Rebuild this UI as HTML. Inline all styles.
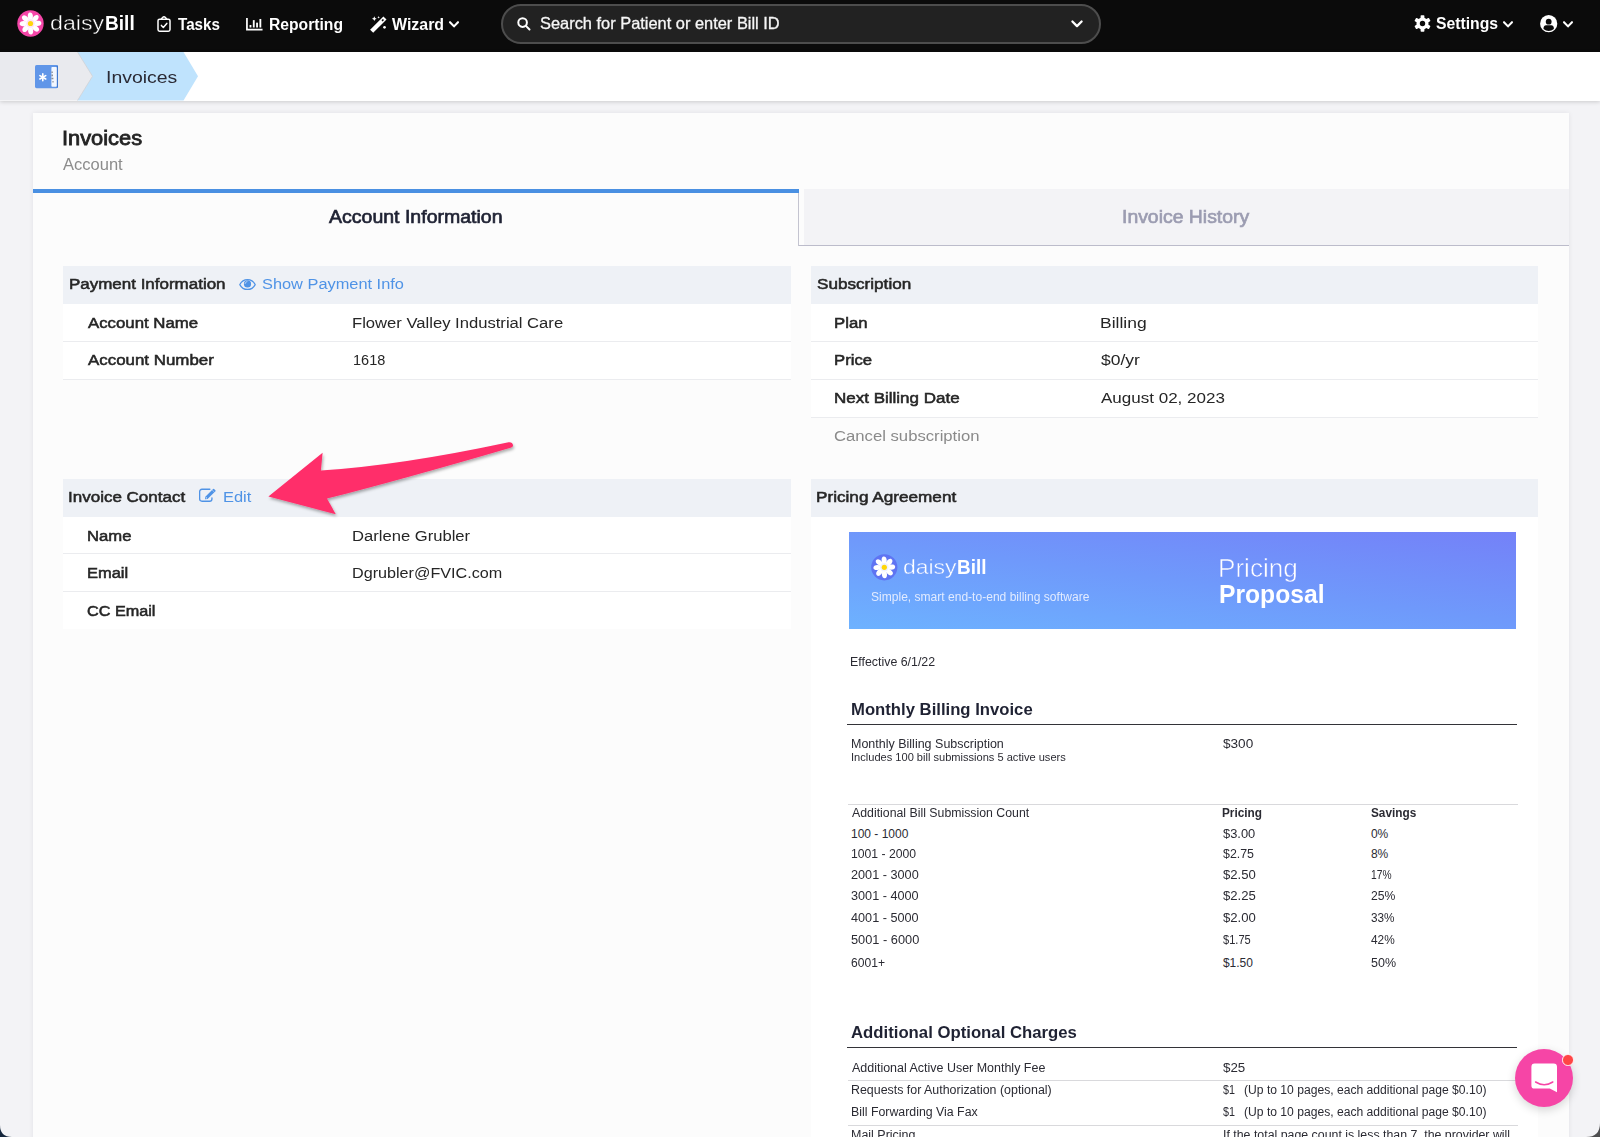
<!DOCTYPE html>
<html lang="en">
<head>
<meta charset="utf-8">
<title>Invoices - daisyBill</title>
<style>
*{box-sizing:border-box;margin:0;padding:0}
html,body{width:1600px;height:1137px;overflow:hidden}
body{position:relative;background:#f3f3f6;font-family:"Liberation Sans",Arial,sans-serif;color:#222;font-size:16px;line-height:1}
.a{position:absolute}
.t{position:absolute;white-space:nowrap;line-height:1;font-size:15.5px;color:#262626}
.b{font-weight:400;-webkit-text-stroke:.55px currentColor}
.bb{font-weight:700}
svg{position:absolute;overflow:visible}

/* ---------- top nav ---------- */
#nav{position:absolute;left:0;top:0;width:1600px;height:52px;background:#0b0b0b}
#nav .t{color:#fff}
#search{position:absolute;left:500.5px;top:4.3px;width:600px;height:39.5px;border-radius:20px;background:#222;border:2.2px solid #4d4d4d}

/* ---------- breadcrumb ---------- */
#crumbs{position:absolute;left:0;top:52px;width:1600px;height:48.5px;background:#fff;box-shadow:0 1px 4px rgba(0,0,0,.17)}

/* ---------- card ---------- */
#card{position:absolute;left:33px;top:112.5px;width:1535.5px;height:1040px;background:#fcfcfc;box-shadow:0 0 5px rgba(30,30,40,.075)}
.hdr{position:absolute;height:38px;background:#eef1f6}
.row{position:absolute;height:38px;background:#fff;border-bottom:1px solid #ebecef}
.lnk{color:#4f93e6}
.doc{color:#2b2b33;font-size:12px}
.rule{position:absolute;left:847.3px;width:670.2px;height:1.25px;background:#333338}
.lrule{position:absolute;left:847.5px;width:670px;height:1px;background:#d9d9dc}
</style>
</head>
<body>

<!-- ================= NAV ================= -->
<div id="nav">
  <!-- daisy logo -->
  <svg style="left:17px;top:10.1px" width="27" height="27" viewBox="-13.5 -13.5 27 27">
    <circle r="13.2" fill="#f546a8"/>
    <g fill="#fff">
      <path d="M-1.2,-2.2 C-3.2,-6 -3.4,-10.6 -0.6,-10.9 C2.6,-11.1 3.2,-6.5 1.4,-2.2 Z"/><path d="M-1.2,-2.2 C-3.2,-6 -3.4,-10.6 -0.6,-10.9 C2.6,-11.1 3.2,-6.5 1.4,-2.2 Z" transform="rotate(45)"/><path d="M-1.2,-2.2 C-3.2,-6 -3.4,-10.6 -0.6,-10.9 C2.6,-11.1 3.2,-6.5 1.4,-2.2 Z" transform="rotate(90)"/><path d="M-1.2,-2.2 C-3.2,-6 -3.4,-10.6 -0.6,-10.9 C2.6,-11.1 3.2,-6.5 1.4,-2.2 Z" transform="rotate(135)"/><path d="M-1.2,-2.2 C-3.2,-6 -3.4,-10.6 -0.6,-10.9 C2.6,-11.1 3.2,-6.5 1.4,-2.2 Z" transform="rotate(180)"/><path d="M-1.2,-2.2 C-3.2,-6 -3.4,-10.6 -0.6,-10.9 C2.6,-11.1 3.2,-6.5 1.4,-2.2 Z" transform="rotate(225)"/><path d="M-1.2,-2.2 C-3.2,-6 -3.4,-10.6 -0.6,-10.9 C2.6,-11.1 3.2,-6.5 1.4,-2.2 Z" transform="rotate(270)"/><path d="M-1.2,-2.2 C-3.2,-6 -3.4,-10.6 -0.6,-10.9 C2.6,-11.1 3.2,-6.5 1.4,-2.2 Z" transform="rotate(315)"/>
      <circle r="4.2" fill="#ffe3f3"/>
    </g>
    <circle r="2.6" fill="#ffd60a"/>
  </svg>
  <span class="t" style="font-size:20px;-webkit-text-stroke:.4px #0b0b0b;left:50.33px;top:13px;transform:scaleX(1.1589);transform-origin:0 0">daisy</span>
  <span class="t bb" style="font-size:20px;left:105.41px;top:13px;transform:scaleX(0.9544);transform-origin:0 0">Bill</span>

  <!-- tasks icon -->
  <svg style="left:157px;top:16px" width="14" height="16" viewBox="0 0 14 16" fill="none" stroke="#fff" stroke-width="1.5" stroke-linejoin="round" stroke-linecap="round">
    <rect x="1" y="3.2" width="12" height="12" rx="1.6"/>
    <path d="M4.2 3.2 L5.6 1.5 Q7 .1 8.4 1.5 L9.8 3.2"/>
    <path d="M4.4 9.4 L6.3 11.4 L9.8 7.4"/>
  </svg>
  <span class="t bb" style="font-size:16px;left:178.06px;top:17px;transform:scaleX(0.9480);transform-origin:0 0">Tasks</span>

  <!-- reporting icon -->
  <svg style="left:246.4px;top:17.6px" width="16.6" height="12.6" viewBox="0 0 17 13" fill="#fff">
    <path d="M0 0 H1.8 V11.2 H17 V13 H0 Z"/>
    <rect x="3.6" y="7.2" width="1.9" height="2.6"/><rect x="7" y="2.2" width="1.9" height="7.6"/><rect x="10.4" y="4.8" width="1.9" height="5"/><rect x="13.8" y="1" width="1.9" height="8.8"/>
  </svg>
  <span class="t bb" style="font-size:16px;left:268.72px;top:17px;transform:scaleX(0.9796);transform-origin:0 0">Reporting</span>

  <!-- wizard (magic wand) icon -->
  <svg style="left:369.5px;top:15.5px" width="17" height="17" viewBox="0 0 17 17" fill="#fff">
    <path d="M.1 13.7 L13.4 .4 L16.5 3.5 L3.2 16.8 Z"/>
    <path d="M12.9 2.9 L14.0 4.0 L12.6 5.4 L11.5 4.3 Z" fill="#0b0b0b"/>
    <path d="M4.3 .3 l.75 1.6 1.6.75 -1.6.75 -.75 1.6 -.75-1.6 -1.6-.75 1.6-.75z"/>
    <path d="M8.6 0 l.4 .9 .9 .4 -.9 .4 -.4 .9 -.4-.9 -.9-.4 .9-.4z"/>
    <circle cx="14.5" cy="11.3" r="1.35"/>
  </svg>
  <span class="t bb" style="font-size:16px;left:392.00px;top:17px;transform:scaleX(0.9951);transform-origin:0 0">Wizard</span>
  <svg style="left:449px;top:21.3px" width="10" height="7" viewBox="0 0 10 7" fill="none" stroke="#fff" stroke-width="2.1" stroke-linecap="round" stroke-linejoin="round"><path d="M1 1.2 L5 5.4 L9 1.2"/></svg>

  <!-- search -->
  <div id="search"></div>
  <svg style="left:517px;top:16.9px" width="14" height="14" viewBox="0 0 14 14" fill="none" stroke="#fff" stroke-width="2" stroke-linecap="round"><circle cx="5.6" cy="5.6" r="4.3"/><path d="M8.9 8.9 L12.5 12.5"/></svg>
  <span class="t" style="font-size:16.5px;color:#f6f6f6;-webkit-text-stroke:.3px #f6f6f6;left:540.20px;top:15px;transform:scaleX(0.9938);transform-origin:0 0">Search for Patient or enter Bill ID</span>
  <svg style="left:1070.5px;top:20px" width="12" height="8" viewBox="0 0 12 8" fill="none" stroke="#fff" stroke-width="2.3" stroke-linecap="round" stroke-linejoin="round"><path d="M1.4 1.5 L6 6.1 L10.6 1.5"/></svg>

  <!-- settings -->
  <svg style="left:1413.5px;top:15.2px" width="17" height="17" viewBox="-8.5 -8.5 17 17">
    <g fill="#fff">
      <circle r="6"/>
      <rect x="-1.9" y="-8.3" width="3.8" height="4" rx=".7"/><rect x="-1.9" y="-8.3" width="3.8" height="4" rx=".7" transform="rotate(60)"/><rect x="-1.9" y="-8.3" width="3.8" height="4" rx=".7" transform="rotate(120)"/><rect x="-1.9" y="-8.3" width="3.8" height="4" rx=".7" transform="rotate(180)"/><rect x="-1.9" y="-8.3" width="3.8" height="4" rx=".7" transform="rotate(240)"/><rect x="-1.9" y="-8.3" width="3.8" height="4" rx=".7" transform="rotate(300)"/>
    </g>
    <circle r="2.7" fill="#0b0b0b"/>
  </svg>
  <span class="t bb" style="font-size:16px;left:1435.81px;top:16px;transform:scaleX(0.9839);transform-origin:0 0">Settings</span>
  <svg style="left:1503px;top:21.4px" width="10" height="7" viewBox="0 0 10 7" fill="none" stroke="#fff" stroke-width="2.05" stroke-linecap="round" stroke-linejoin="round"><path d="M1 1.2 L5 5.4 L9 1.2"/></svg>

  <!-- user -->
  <svg style="left:1539.7px;top:15px" width="17.4" height="17.4" viewBox="-8.7 -8.7 17.4 17.4">
    <circle r="8.6" fill="#fff"/>
    <circle cy="-2" r="2.9" fill="#0b0b0b"/>
    <path d="M-5.2 5.2 Q-5.2 1.6 -2.6 1.6 H2.6 Q5.2 1.6 5.2 5.2 Q2.8 7.2 0 7.2 Q-2.8 7.2 -5.2 5.2Z" fill="#0b0b0b"/>
  </svg>
  <svg style="left:1563px;top:21.4px" width="10" height="7" viewBox="0 0 10 7" fill="none" stroke="#fff" stroke-width="2.05" stroke-linecap="round" stroke-linejoin="round"><path d="M1 1.2 L5 5.4 L9 1.2"/></svg>
</div>

<!-- ================= BREADCRUMB ================= -->
<div id="crumbs">
  <svg style="left:0;top:0" width="210" height="48.5" viewBox="0 0 210 48.5">
    <path d="M0 0 H77.5 L92.5 24.25 L77.5 48.5 H0 Z" fill="#e9eaee"/>
    <path d="M77.5 0 H183.5 L198 24.25 L183.5 48.5 H77.5 L92.5 24.25 Z" fill="#bfe3fd"/>
    <path d="M77.5 0 L92.5 24.25 L77.5 48.5" fill="none" stroke="#cfd0d4" stroke-width=".8"/>
    <!-- address-book style icon -->
    <rect x="35" y="13" width="23" height="23.2" rx="1.6" fill="#6096e8"/>
    <rect x="56.6" y="13.6" width="1.4" height="22" fill="#3f78d0"/>
    <rect x="51.4" y="15" width="5.4" height="19.8" rx=".8" fill="#f2f7ff"/>
    <path d="M51.4 19.5 h1.4 v1.6 h-1.4z M51.4 22.6 h1.6 v1.6 h-1.6z M51.4 25.8 h2 v1.4 h-2z M52.4 29 h1.2 v1.4 h-1.2z" fill="#8a8f99"/>
    <g stroke="#fff" stroke-width="1.65" stroke-linecap="round"><path d="M42.8 21.9 V28.7"/><path d="M39.9 23.6 L45.7 27"/><path d="M39.9 27 L45.7 23.6"/></g>
  </svg>
  <span class="t" style="font-size:17.2px;color:#2a2a35;left:106.30px;top:17px;transform:scaleX(1.1311);transform-origin:0 0">Invoices</span>
</div>

<!-- ================= CARD ================= -->
<div id="card"></div>
<span class="t b" style="font-size:20px;color:#242424;-webkit-text-stroke-width:.8px;left:61.96px;top:128px;transform:scaleX(1.0909);transform-origin:0 0">Invoices</span>
<span class="t" style="font-size:16px;color:#8c8c8c;left:63.20px;top:157px;transform:scaleX(1.0320);transform-origin:0 0">Account</span>

<!-- tabs -->
<div class="a" style="left:33px;top:189.25px;width:765.75px;height:3.9px;background:#4a90e2"></div>
<div class="a" style="left:803.75px;top:189.25px;width:764.75px;height:56px;background:#f3f3f6"></div>
<div class="a" style="left:798.3px;top:193px;width:1px;height:52.6px;background:#c4c4d0"></div>
<div class="a" style="left:798.6px;top:244.7px;width:770px;height:1px;background:#bcbccb"></div>
<span class="t b" style="font-size:18px;color:#1f2233;-webkit-text-stroke-width:.65px;left:329.14px;top:208px;transform:scaleX(1.0842);transform-origin:0 0">Account Information</span>
<span class="t b" style="font-size:18px;color:#9b9cb1;-webkit-text-stroke-width:.65px;left:1122.05px;top:208px;transform:scaleX(1.0772);transform-origin:0 0">Invoice History</span>

<!-- left column: payment information -->
<div class="hdr" style="left:63px;top:265.5px;width:727.5px"></div>
<div class="row" style="left:63px;top:303.5px;width:727.5px"></div>
<div class="row" style="left:63px;top:341.5px;width:727.5px"></div>
<span class="t b" style="left:68.51px;top:276px;transform:scaleX(1.0945);transform-origin:0 0">Payment Information</span>
<svg style="left:238.7px;top:278.5px" width="17" height="11.2" viewBox="0 0 17 11.2">
  <path d="M.8 5.6 C2.6 2.2 5.4 .7 8.5 .7 S14.4 2.2 16.2 5.6 C14.4 9 11.6 10.5 8.5 10.5 S2.6 9 .8 5.6Z" fill="none" stroke="#4f93e6" stroke-width="1.25" stroke-linejoin="round"/>
  <circle cx="8.5" cy="4.9" r="3.6" fill="#4f93e6"/><path d="M6 4.6 Q6.2 2.8 8 2.5" fill="none" stroke="#cfe0f8" stroke-width=".8" stroke-linecap="round"/>
</svg>
<span class="t lnk" style="left:261.81px;top:276px;transform:scaleX(1.0556);transform-origin:0 0">Show Payment Info</span>
<span class="t b" style="left:87.87px;top:315px;transform:scaleX(1.0837);transform-origin:0 0">Account Name</span>
<span class="t" style="left:352.36px;top:315px;transform:scaleX(1.0718);transform-origin:0 0">Flower Valley Industrial Care</span>
<span class="t b" style="left:87.87px;top:352px;transform:scaleX(1.0903);transform-origin:0 0">Account Number</span>
<span class="t" style="left:352.83px;top:352px;transform:scaleX(0.9354);transform-origin:0 0">1618</span>

<!-- left column: invoice contact -->
<div class="hdr" style="left:63px;top:478.5px;width:727.5px"></div>
<div class="row" style="left:63px;top:516.5px;width:727.5px;height:37.5px"></div>
<div class="row" style="left:63px;top:554px;width:727.5px"></div>
<div class="row" style="left:63px;top:592px;width:727.5px;height:37.3px;border-bottom:0"></div>
<span class="t b" style="left:67.83px;top:489px;transform:scaleX(1.0969);transform-origin:0 0">Invoice Contact</span>
<svg style="left:199.4px;top:488.4px" width="17.4" height="14.6" viewBox="0 0 17.4 14.6" fill="none" stroke="#4f93e6" stroke-width="1.3" stroke-linejoin="round" stroke-linecap="round">
  <path d="M12.95 9.8 V10.9 Q12.95 13.25 10.6 13.25 H3 Q.65 13.25 .65 10.9 V3.6 Q.65 1.25 3 1.25 H10.9"/>
  <path d="M6 11.3 L6.3 8.75 L14.1 .95 Q14.6 .5 15.1 .95 L16.4 2.25 Q16.85 2.75 16.4 3.25 L8.55 11.05 Z" fill="#4f93e6" stroke="none"/>
  <path d="M13.1 1.9 L15.4 4.2" stroke="#cfe0f8" stroke-width=".55"/>
  <circle cx="7.35" cy="9.95" r=".62" fill="#e6eefb" stroke="none"/>
</svg>
<span class="t lnk" style="left:222.87px;top:489px;transform:scaleX(1.0614);transform-origin:0 0">Edit</span>
<span class="t b" style="left:86.52px;top:528px;transform:scaleX(1.0750);transform-origin:0 0">Name</span>
<span class="t" style="left:352.36px;top:528px;transform:scaleX(1.0713);transform-origin:0 0">Darlene Grubler</span>
<span class="t b" style="left:86.54px;top:565px;transform:scaleX(1.0622);transform-origin:0 0">Email</span>
<span class="t" style="left:352.40px;top:565px;transform:scaleX(1.0427);transform-origin:0 0">Dgrubler@FVIC.com</span>
<span class="t b" style="left:87.08px;top:603px;transform:scaleX(1.0459);transform-origin:0 0">CC Email</span>

<!-- right column: subscription -->
<div class="hdr" style="left:810.5px;top:265.5px;width:727.75px"></div>
<div class="row" style="left:810.5px;top:303.5px;width:727.75px"></div>
<div class="row" style="left:810.5px;top:341.5px;width:727.75px"></div>
<div class="row" style="left:810.5px;top:379.5px;width:727.75px"></div>
<span class="t b" style="left:816.65px;top:276px;transform:scaleX(1.1048);transform-origin:0 0">Subscription</span>
<span class="t b" style="left:834.12px;top:315px;transform:scaleX(1.0803);transform-origin:0 0">Plan</span>
<span class="t" style="left:1099.89px;top:315px;transform:scaleX(1.1282);transform-origin:0 0">Billing</span>
<span class="t b" style="left:834.12px;top:352px;transform:scaleX(1.0765);transform-origin:0 0">Price</span>
<span class="t" style="left:1101.02px;top:352px;transform:scaleX(1.1294);transform-origin:0 0">$0/yr</span>
<span class="t b" style="left:834.10px;top:390px;transform:scaleX(1.0967);transform-origin:0 0">Next Billing Date</span>
<span class="t" style="left:1101.30px;top:390px;transform:scaleX(1.0976);transform-origin:0 0">August 02, 2023</span>
<span class="t" style="color:#8a8a8a;left:834.39px;top:428px;transform:scaleX(1.0757);transform-origin:0 0">Cancel subscription</span>

<!-- right column: pricing agreement -->
<div class="hdr" style="left:810.5px;top:478.5px;width:727.75px"></div>
<div class="a" style="left:810.5px;top:516.5px;width:727.75px;height:640px;background:#fff"></div>
<span class="t b" style="left:816.09px;top:489px;transform:scaleX(1.1070);transform-origin:0 0">Pricing Agreement</span>
<!-- pricing proposal document -->
<div class="a" style="left:848.75px;top:531.75px;width:667.5px;height:97px;background:linear-gradient(7deg,#6db2ff 0%,#6f99fb 50%,#7481f8 100%)"></div>
<svg style="left:870.5px;top:554.3px" width="26.6" height="26.6" viewBox="-13.3 -13.3 26.6 26.6">
  <circle r="13.1" fill="#5f74f2"/>
  <g fill="#fff">
    <path d="M-1.2,-2.2 C-3.2,-6 -3.4,-10.6 -0.6,-10.9 C2.6,-11.1 3.2,-6.5 1.4,-2.2 Z"/><path d="M-1.2,-2.2 C-3.2,-6 -3.4,-10.6 -0.6,-10.9 C2.6,-11.1 3.2,-6.5 1.4,-2.2 Z" transform="rotate(45)"/><path d="M-1.2,-2.2 C-3.2,-6 -3.4,-10.6 -0.6,-10.9 C2.6,-11.1 3.2,-6.5 1.4,-2.2 Z" transform="rotate(90)"/><path d="M-1.2,-2.2 C-3.2,-6 -3.4,-10.6 -0.6,-10.9 C2.6,-11.1 3.2,-6.5 1.4,-2.2 Z" transform="rotate(135)"/><path d="M-1.2,-2.2 C-3.2,-6 -3.4,-10.6 -0.6,-10.9 C2.6,-11.1 3.2,-6.5 1.4,-2.2 Z" transform="rotate(180)"/><path d="M-1.2,-2.2 C-3.2,-6 -3.4,-10.6 -0.6,-10.9 C2.6,-11.1 3.2,-6.5 1.4,-2.2 Z" transform="rotate(225)"/><path d="M-1.2,-2.2 C-3.2,-6 -3.4,-10.6 -0.6,-10.9 C2.6,-11.1 3.2,-6.5 1.4,-2.2 Z" transform="rotate(270)"/><path d="M-1.2,-2.2 C-3.2,-6 -3.4,-10.6 -0.6,-10.9 C2.6,-11.1 3.2,-6.5 1.4,-2.2 Z" transform="rotate(315)"/>
    <circle r="4.2" fill="#eef1ff"/>
  </g>
  <circle r="2.6" fill="#ffd60a"/>
</svg>
<span class="t" style="font-size:21px;color:#fff;-webkit-text-stroke:.4px #6e9bfb;left:903.08px;top:556px;transform:scaleX(1.0928);transform-origin:0 0">daisy</span>
<span class="t bb" style="font-size:21px;color:#fff;left:957.05px;top:556px;transform:scaleX(0.9008);transform-origin:0 0">Bill</span>
<span class="t" style="font-size:12px;color:#e2ebff;left:870.90px;top:591px;transform:scaleX(1.0042);transform-origin:0 0">Simple, smart end-to-end billing software</span>
<span class="t" style="font-size:26.5px;color:#fff;-webkit-text-stroke:.55px #7090fa;left:1218.43px;top:555px;transform:scaleX(0.9858);transform-origin:0 0">Pricing</span>
<span class="t bb" style="font-size:25.5px;color:#fff;left:1218.71px;top:582px;transform:scaleX(0.9668);transform-origin:0 0">Proposal</span>

<span class="t doc" style="left:850.37px;top:656px;transform:scaleX(1.0321);transform-origin:0 0">Effective 6/1/22</span>

<span class="t bb" style="font-size:16.5px;color:#1f2233;left:850.79px;top:701px;transform:scaleX(1.0112);transform-origin:0 0">Monthly Billing Invoice</span>
<div class="rule" style="top:723.8px"></div>
<span class="t doc" style="left:850.56px;top:738px;transform:scaleX(1.0414);transform-origin:0 0">Monthly Billing Subscription</span>
<span class="t doc" style="font-size:11px;left:850.59px;top:752px;transform:scaleX(1.0066);transform-origin:0 0">Includes 100 bill submissions 5 active users</span>
<span class="t doc" style="left:1222.92px;top:738px;transform:scaleX(1.1308);transform-origin:0 0">$300</span>

<div class="lrule" style="top:804px"></div>
<span class="t doc" style="left:851.60px;top:807px;transform:scaleX(1.0258);transform-origin:0 0">Additional Bill Submission Count</span>
<span class="t doc bb" style="left:1222.46px;top:807px;transform:scaleX(0.9834);transform-origin:0 0">Pricing</span>
<span class="t doc bb" style="left:1370.91px;top:807px;transform:scaleX(0.9822);transform-origin:0 0">Savings</span>

<span class="t doc" style="left:851.00px;top:828px">100 - 1000</span><span class="t doc" style="left:1222.93px;top:828px;transform:scaleX(1.0735);transform-origin:0 0">$3.00</span><span class="t doc" style="left:1370.90px;top:828px">0%</span>
<span class="t doc" style="left:850.98px;top:848px;transform:scaleX(1.0160);transform-origin:0 0">1001 - 2000</span><span class="t doc" style="left:1222.94px;top:848px;transform:scaleX(1.0325);transform-origin:0 0">$2.75</span><span class="t doc" style="left:1370.90px;top:848px">8%</span>
<span class="t doc" style="left:851.07px;top:869px;transform:scaleX(1.0571);transform-origin:0 0">2001 - 3000</span><span class="t doc" style="left:1222.93px;top:869px;transform:scaleX(1.0940);transform-origin:0 0">$2.50</span><span class="t doc" style="left:1371.15px;top:869px;transform:scaleX(0.8527);transform-origin:0 0">17%</span>
<span class="t doc" style="left:851.07px;top:890px;transform:scaleX(1.0556);transform-origin:0 0">3001 - 4000</span><span class="t doc" style="left:1222.93px;top:890px;transform:scaleX(1.0940);transform-origin:0 0">$2.25</span><span class="t doc" style="left:1370.89px;top:890px;transform:scaleX(1.0151);transform-origin:0 0">25%</span>
<span class="t doc" style="left:851.34px;top:912px;transform:scaleX(1.0561);transform-origin:0 0">4001 - 5000</span><span class="t doc" style="left:1222.93px;top:912px;transform:scaleX(1.0940);transform-origin:0 0">$2.00</span><span class="t doc" style="left:1370.91px;top:912px;transform:scaleX(0.9806);transform-origin:0 0">33%</span>
<span class="t doc" style="left:851.07px;top:934px;transform:scaleX(1.0667);transform-origin:0 0">5001 - 6000</span><span class="t doc" style="left:1222.97px;top:934px;transform:scaleX(0.9231);transform-origin:0 0">$1.75</span><span class="t doc" style="left:1371.15px;top:934px;transform:scaleX(0.9872);transform-origin:0 0">42%</span>
<span class="t doc" style="left:851.10px;top:957px;transform:scaleX(1.0076);transform-origin:0 0">6001+</span><span class="t doc" style="left:1222.95px;top:957px">$1.50</span><span class="t doc" style="left:1370.88px;top:957px;transform:scaleX(1.0409);transform-origin:0 0">50%</span>

<span class="t bb" style="font-size:16.5px;color:#1f2233;left:851.29px;top:1024px;transform:scaleX(1.0140);transform-origin:0 0">Additional Optional Charges</span>
<div class="rule" style="top:1046.8px"></div>
<span class="t doc" style="left:851.60px;top:1062px;transform:scaleX(1.0388);transform-origin:0 0">Additional Active User Monthly Fee</span><span class="t doc" style="left:1222.92px;top:1062px;transform:scaleX(1.1117);transform-origin:0 0">$25</span>
<div class="lrule" style="top:1080.3px"></div>
<span class="t doc" style="left:850.57px;top:1084px;transform:scaleX(1.0338);transform-origin:0 0">Requests for Authorization (optional)</span><span class="t doc" style="left:1222.98px;top:1084px;transform:scaleX(0.8960);transform-origin:0 0">$1</span><span class="t doc" style="left:1243.64px;top:1084px;transform:scaleX(1.0094);transform-origin:0 0">(Up to 10 pages, each additional page $0.10)</span>
<span class="t doc" style="left:850.57px;top:1106px;transform:scaleX(1.0287);transform-origin:0 0">Bill Forwarding Via Fax</span><span class="t doc" style="left:1222.98px;top:1106px;transform:scaleX(0.8960);transform-origin:0 0">$1</span><span class="t doc" style="left:1243.64px;top:1106px;transform:scaleX(1.0094);transform-origin:0 0">(Up to 10 pages, each additional page $0.10)</span>
<div class="lrule" style="top:1125px"></div>
<span class="t doc" style="left:850.56px;top:1129px;transform:scaleX(1.0390);transform-origin:0 0">Mail Pricing</span><span class="t doc" style="left:1222.57px;top:1129px;transform:scaleX(1.0296);transform-origin:0 0">If the total page count is less than 7, the provider will</span>



<!-- ================= OVERLAY ================= -->
<!-- annotation arrow -->
<svg style="left:0;top:0" width="1600" height="1137" viewBox="0 0 1600 1137">
  <defs><filter id="ash" x="-10%" y="-20%" width="120%" height="150%"><feDropShadow dx="1" dy="2" stdDeviation="1.6" flood-color="#000" flood-opacity=".33"/></filter></defs>
  <path filter="url(#ash)" fill="#ff2e6b" d="M268.4 496.6 L322.6 452.8 L320.9 470.6 Q400 465.5 508.6 442.3 Q512.6 441.9 513 445.2 Q513.2 447.2 510.6 447.7 Q400 480 327 498.6 L335.8 514.2 Z"/>
</svg>

<!-- chat bubble -->
<div class="a" style="left:1514.8px;top:1048.8px;width:58.2px;height:58.2px;border-radius:50%;background:#f645a6;box-shadow:0 3px 10px rgba(0,0,0,.16)"></div>
<svg style="left:1530.8px;top:1063.4px" width="27" height="30" viewBox="0 0 27 30">
  <path d="M3.6 .4 H22.6 Q26 .4 26 3.8 V29.2 L18.8 25.6 H3.6 Q.4 25.6 .4 22.4 V3.8 Q.4 .4 3.6 .4Z" fill="#fff"/>
  <path d="M4.6 19 Q13.2 24.4 21.8 19" fill="none" stroke="#f645a6" stroke-width="1.5" stroke-linecap="round"/>
</svg>
<div class="a" style="left:1562.2px;top:1054.2px;width:11.6px;height:11.6px;border-radius:50%;background:#ff4545;border:1.2px solid #fff5f8"></div>

<!-- window corners -->
<svg style="left:0;top:1125px" width="12" height="12" viewBox="0 0 12 12"><path d="M0 0 V12 H12 Q0 12 0 0Z" fill="#15273d"/></svg>
<svg style="left:1586px;top:1123px" width="14" height="14" viewBox="0 0 14 14"><path d="M14 0 V14 H0 Q14 14 14 0Z" fill="#4e4e50"/></svg>


</body>
</html>
